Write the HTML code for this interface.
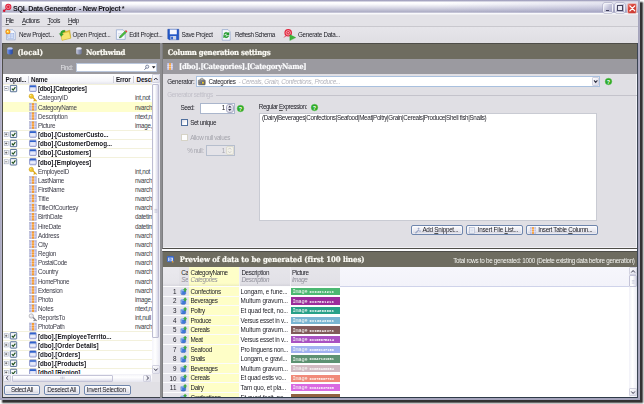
<!DOCTYPE html>
<html lang="en">
<head>
<meta charset="utf-8">
<title>SQL Data Generator - New Project *</title>
<style>
html,body{margin:0;padding:0;}
body{width:644px;height:404px;background:#fff;overflow:hidden;position:relative;font-family:"Liberation Sans","DejaVu Sans",sans-serif;}
#win{filter:blur(0.45px);position:absolute;left:0;top:0;width:640px;height:400px;background:#e1e0e5;box-shadow:2.4px 2.4px 1.6px 0.2px rgba(0,0,0,.8);overflow:hidden;}
#win div{position:absolute;box-sizing:border-box;}
#win svg{position:absolute;overflow:visible;}
.x{position:absolute;white-space:nowrap;line-height:1;color:#1c1c24;font-size:6.3px;}
.t{font-size:6.3px;}
.tb{font-size:6.3px;font-weight:bold;color:#15151c;}
.ttl{font-size:7.2px;font-weight:bold;color:#18181e;}
.h1{font-family:"DejaVu Serif Condensed","DejaVu Serif",serif;font-weight:bold;color:#fbfaf4;font-size:7.7px;-webkit-text-stroke:0.22px #fbfaf4;}
.h2{font-family:"DejaVu Serif Condensed","DejaVu Serif",serif;font-weight:bold;color:#fbfbfd;font-size:7.7px;-webkit-text-stroke:0.15px #fbfbfd;}
.g{color:#a5a5ad;}
.g2{color:#c0bfc8;}
.gi{color:#b4b4bc;font-style:italic;}
.w{color:#f4f4f0;}
.col{color:#3c3c48;}
.mono{font-family:"Liberation Mono","DejaVu Sans Mono",monospace;color:#f4f8f4;font-size:5.2px;}
.mono2{font-family:"Liberation Mono","DejaVu Sans Mono",monospace;color:#fff;font-size:3.6px;font-weight:bold;}
u{text-decoration-thickness:0.4px;text-underline-offset:0.5px;text-decoration-color:#555;}
.btn{border:1px solid #6f86ad;border-radius:2px;background:linear-gradient(#fbfbfd,#e9e9f0 60%,#cfcfdc);box-shadow:inset 0 0 0 0.5px #fff;}

</style>
</head>
<body>
<div id="win">
<div style="left:0px;top:0px;width:640px;height:15px;background:linear-gradient(#a3a2be 0,#a9a8c4 1.2px,#ffffff 1.8px,#fbfbfd 4px,#d6d6e4 8px,#a9a9c2 12.2px,#f4f4f9 13px,#ffffff 14.2px,#cfcfd6 15px);"></div>
<div style="left:0px;top:15px;width:640px;height:11.5px;background:#e3e2e7;"></div>
<div style="left:0px;top:26.2px;width:640px;height:0.9px;background:#c9c8ce;"></div>
<div style="left:0px;top:27px;width:640px;height:17px;background:linear-gradient(#e6e5ea,#dfdee3);"></div>
<div style="left:0px;top:1px;width:2.2px;height:399px;background:linear-gradient(90deg,#a6a5bd,#bcbbd0);"></div>
<div style="left:638px;top:1px;width:2.2px;height:399px;background:linear-gradient(90deg,#a2a1b9,#aeadc4);"></div>
<div style="left:0px;top:397.8px;width:640px;height:2.2px;background:#a5a4bc;"></div>
<svg style="left:2px;top:2px" width="12" height="12" viewBox="0 0 12 12"><line x1="2.3" y1="8.6" x2="4.6" y2="6.6" stroke="#d8203a" stroke-width="1"/><circle cx="6.3" cy="4.9" r="3.1" fill="#e0223c"/><circle cx="6.3" cy="4.9" r="1.7" fill="none" stroke="#f7a9b3" stroke-width="0.7"/><circle cx="2.2" cy="8.8" r="1.25" fill="#d8102c"/></svg>
<div style="left:440px;top:1.6px;width:198px;height:11px;background:linear-gradient(90deg,rgba(150,150,195,0),rgba(150,150,195,.3));"></div>
<div style="left:603.4px;top:3.3px;width:9.8px;height:10px;border-radius:1.5px;background:linear-gradient(135deg,#f4f4fb,#c4c4da 50%,#a6a6c4);border:0.6px solid #f2f2f8;box-shadow:0 0 0 0.4px #9c9cb8;"></div>
<div style="left:606px;top:9.6px;width:3.2px;height:1.3px;background:#3c3c56;"></div>
<div style="left:615.2px;top:3.3px;width:9.8px;height:10px;border-radius:1.5px;background:linear-gradient(135deg,#f4f4fb,#c4c4da 50%,#a6a6c4);border:0.6px solid #f2f2f8;box-shadow:0 0 0 0.4px #9c9cb8;"></div>
<div style="left:617.3px;top:5.4px;width:5.8px;height:5.4px;border:0.7px solid #44445e;border-top:1.7px solid #44445e;background:#e9e9f3;"></div>
<div style="left:626.6px;top:2.9px;width:10.7px;height:10.8px;border-radius:2px;background:linear-gradient(135deg,#e57a72,#d9463d 35%,#c8382f);border:0.5px solid #e9b9b9;"></div>
<svg style="left:626.6px;top:2.9px" width="10.7" height="10.8" viewBox="0 0 10.7 10.8"><path d="M2.9 2.9 L7.8 7.9 M7.8 2.9 L2.9 7.9" stroke="#fff" stroke-width="1.3" stroke-linecap="round"/></svg>
<svg style="left:0;top:0" width="640" height="48" viewBox="0 0 640 48"><path d="M6.6 29.8 h6.4 l2.2 2.2 v7.8 h-8.6 z" fill="#f6f8fd" stroke="#8ea2cc" stroke-width="0.7"/><rect x="7.8" y="33.4" width="6" height="5.2" fill="#dfe8fa" stroke="#8ea6dc" stroke-width="0.5"/><path d="M7.8 35h6M7.8 36.8h6M10.6 33.4v5.2" stroke="#9db3e4" stroke-width="0.45"/><circle cx="7.9" cy="31.7" r="2.5" fill="#f08a1e"/><circle cx="7.9" cy="31.7" r="1.5" fill="#fbd23c"/><circle cx="7.6" cy="31.4" r="0.6" fill="#fff6c0"/><path d="M61.4 31.6 l3.4 -1.2 l1.2 1 l3.8 -1.2 l0.9 7.6 l-8.3 2z" fill="#e6c432" stroke="#b89a22" stroke-width="0.5"/><path d="M60.6 33.6 l8.6 -2 l1.6 6.6 l-8.8 2.2z" fill="#f6e46e" stroke="#c8aa2c" stroke-width="0.5"/><path d="M64.8 30.4 c-2.6 -0.4 -4.4 1.2 -4.3 3.4 l-1.2 -0.2 l1.9 2.9 l2.2 -2.4 l-1.2 -0.2 c0 -1.2 1 -2 2.7 -1.9z" fill="#2fa62e" stroke="#1f7f1f" stroke-width="0.3"/><path d="M116.4 29.8 h6.6 l2.2 2.2 v7.4 h-8.8 z" fill="#f6f8fd" stroke="#8ea2cc" stroke-width="0.7"/><path d="M118 33.6h4.4M118 35.2h3.4M118 36.8h2.4" stroke="#c3cde6" stroke-width="0.6"/><path d="M119.4 38 l0.6 -2 l5 -5 l1.4 1.4 l-5 5z" fill="#4dba40" stroke="#2e8a2a" stroke-width="0.35"/><path d="M119.4 38 l0.3 -1.1 l0.8 0.8z" fill="#333"/><path d="M125 31 l1 -1 l1.4 1.4 l-1 1z" fill="#e8403a"/><path d="M167.8 29.3 h11 v10.4 h-9.8 l-1.2 -1.2z" fill="#2559c7" stroke="#1c45a0" stroke-width="0.5"/><rect x="169.8" y="29.5" width="7" height="4.8" fill="#f6f8fe"/><rect x="170.4" y="36" width="5.8" height="3.7" fill="#cfd6e6"/><rect x="171.2" y="36.7" width="1.7" height="2.6" fill="#2559c7"/><path d="M222.2 29.6 h5.8 l2.2 2.2 v8.4 h-8 z" fill="#f6f8fd" stroke="#8ea2cc" stroke-width="0.7"/><path d="M223.7 34.3 a2.7 2.5 0 0 1 4.5 -1.4 l0.9 -0.9 v2.9 h-2.9 l1 -1 a1.4 1.3 0 0 0 -2.2 0.5z" fill="#22a02e" stroke="#1c8a26" stroke-width="0.25"/><path d="M228.9 35.8 a2.7 2.5 0 0 1 -4.5 1.4 l-0.9 0.9 v-2.9 h2.9 l-1 1 a1.4 1.3 0 0 0 2.2 -0.5z" fill="#22a02e" stroke="#1c8a26" stroke-width="0.25"/><line x1="284.2" y1="37.4" x2="286.2" y2="35.4" stroke="#d8203a" stroke-width="0.9"/><circle cx="288.2" cy="32.8" r="3.8" fill="#e1243c"/><circle cx="288.2" cy="32.8" r="2.2" fill="none" stroke="#fbc4cb" stroke-width="0.75"/><circle cx="288.2" cy="32.8" r="0.75" fill="#fbc4cb"/><path d="M289.8 34.6 l6 3 l-6 3z" fill="#3fb53a" stroke="#2a8f2a" stroke-width="0.3"/></svg>
<div style="left:2.2px;top:43.4px;width:636px;height:354.4px;background:#8e8e91;"></div>
<div style="left:162px;top:248.6px;width:476px;height:3px;background:#fbfbfd;"></div>
<div style="left:2.2px;top:43.4px;width:157.6px;height:354.2px;background:#fff;border:0.8px solid #4e4d48;"></div>
<div style="left:3px;top:44.2px;width:156.8px;height:14.9px;background:#6e6c60;"></div>
<div style="left:3px;top:59px;width:156.8px;height:15.3px;background:#9b9aa0;"></div>
<svg style="left:6.5px;top:46.9px" width="6" height="7.6" viewBox="0 0 6 7.6"><defs><linearGradient id="dbg6" x1="0" x2="1"><stop offset="0" stop-color="#7d9ae6"/><stop offset="0.5" stop-color="#3d64c6"/><stop offset="1" stop-color="#2a4a9e"/></linearGradient></defs><path d="M0.2 1.4 v4.8 a2.8 1.2 0 0 0 5.6 0 v-4.8z" fill="url(#dbg6)"/><ellipse cx="3" cy="1.4" rx="2.8" ry="1.2" fill="#b9c6f0"/></svg>
<svg style="left:75.5px;top:46.9px" width="6" height="7.6" viewBox="0 0 6 7.6"><defs><linearGradient id="dbg75" x1="0" x2="1"><stop offset="0" stop-color="#c9cce0"/><stop offset="0.5" stop-color="#8f96b4"/><stop offset="1" stop-color="#6f7693"/></linearGradient></defs><path d="M0.2 1.4 v4.8 a2.8 1.2 0 0 0 5.6 0 v-4.8z" fill="url(#dbg75)"/><ellipse cx="3" cy="1.4" rx="2.8" ry="1.2" fill="#e6e8f2"/></svg>
<div style="left:76.4px;top:62.6px;width:80.7px;height:9.6px;background:#fff;border:0.6px solid #b9c6dc;"></div>
<svg style="left:143px;top:64px" width="14" height="7" viewBox="0 0 14 7"><circle cx="4.2" cy="2.7" r="1.6" fill="#eef2fa" stroke="#66708c" stroke-width="0.8"/><line x1="3" y1="4" x2="1.4" y2="5.8" stroke="#66708c" stroke-width="0.9"/><path d="M8.9 2.3 h3.6 l-1.8 2.2z" fill="#181820"/></svg>
<div style="left:3px;top:74.3px;width:149.4px;height:9.9px;background:linear-gradient(#ffffff,#f6f6fa 70%,#e6e6ee);"></div>
<div style="left:28.4px;top:75.8px;width:0.7px;height:7.4px;background:#cfcfd8;"></div>
<div style="left:113px;top:75.8px;width:0.7px;height:7.4px;background:#cfcfd8;"></div>
<div style="left:133px;top:75.8px;width:0.7px;height:7.4px;background:#cfcfd8;"></div>
<div style="left:134px;top:74px;width:18.4px;height:10px;overflow:hidden;"><span class="x tb" style="left:2.5px;top:3px;letter-spacing:-0.1px;">Descri</span></div>
<div style="left:152.4px;top:74px;width:7.4px;height:300.4px;background:linear-gradient(90deg,#f4f4fa,#ffffff 40%,#e9e9f2);"></div>
<div style="left:152.4px;top:74.4px;width:7.2px;height:8.8px;background:linear-gradient(135deg,#ffffff,#dcdce9);border:0.5px solid #d2d2e0;border-radius:1px;"></div>
<div style="left:152.4px;top:365.4px;width:7.2px;height:8.8px;background:linear-gradient(135deg,#ffffff,#dcdce9);border:0.5px solid #d2d2e0;border-radius:1px;"></div>
<div style="left:152.4px;top:83.8px;width:7px;height:254px;background:linear-gradient(90deg,#f7f7fc,#ffffff 35%,#d3d3e6);border:0.6px solid #bdbdd2;border-radius:1px;"></div>
<svg style="left:152.4px;top:74px" width="8" height="301" viewBox="0 0 8 301"><path d="M2 6 l1.8 -2 l1.8 2" fill="none" stroke="#303044" stroke-width="0.95"/><path d="M2 294.6 l1.8 2 l1.8 -2" fill="none" stroke="#303044" stroke-width="0.95"/><path d="M2.4 135.4h3M2.4 136.8h3M2.4 138.2h3" stroke="#aeb0c8" stroke-width="0.6"/></svg>
<div style="left:134px;top:93.33px;width:18.4px;height:9.16px;overflow:hidden;"><span class="x t col" style="left:1px;top:1.67px;letter-spacing:-0.3px;">int,not</span></div>
<div style="left:3px;top:102.49px;width:149.4px;height:9.16px;background:#fefecd;"></div>
<div style="left:134px;top:102.49px;width:18.4px;height:9.16px;overflow:hidden;"><span class="x t col" style="left:1px;top:2.51px;letter-spacing:-0.3px;">nvarch</span></div>
<div style="left:134px;top:111.64px;width:18.4px;height:9.16px;overflow:hidden;"><span class="x t col" style="left:1px;top:2.36px;letter-spacing:-0.3px;">ntext,n</span></div>
<div style="left:134px;top:120.8px;width:18.4px;height:9.16px;overflow:hidden;"><span class="x t col" style="left:1px;top:2.2px;letter-spacing:-0.3px;">image,</span></div>
<div style="left:134px;top:166.58px;width:18.4px;height:9.16px;overflow:hidden;"><span class="x t col" style="left:1px;top:2.42px;letter-spacing:-0.3px;">int,not</span></div>
<div style="left:134px;top:175.74px;width:18.4px;height:9.16px;overflow:hidden;"><span class="x t col" style="left:1px;top:2.26px;letter-spacing:-0.3px;">nvarch</span></div>
<div style="left:134px;top:184.9px;width:18.4px;height:9.16px;overflow:hidden;"><span class="x t col" style="left:1px;top:2.1px;letter-spacing:-0.3px;">nvarch</span></div>
<div style="left:134px;top:194.06px;width:18.4px;height:9.16px;overflow:hidden;"><span class="x t col" style="left:1px;top:1.94px;letter-spacing:-0.3px;">nvarch</span></div>
<div style="left:134px;top:203.21px;width:18.4px;height:9.16px;overflow:hidden;"><span class="x t col" style="left:1px;top:1.79px;letter-spacing:-0.3px;">nvarch</span></div>
<div style="left:134px;top:212.37px;width:18.4px;height:9.16px;overflow:hidden;"><span class="x t col" style="left:1px;top:1.63px;letter-spacing:-0.3px;">datetim</span></div>
<div style="left:134px;top:221.53px;width:18.4px;height:9.16px;overflow:hidden;"><span class="x t col" style="left:1px;top:2.47px;letter-spacing:-0.3px;">datetim</span></div>
<div style="left:134px;top:230.68px;width:18.4px;height:9.16px;overflow:hidden;"><span class="x t col" style="left:1px;top:2.32px;letter-spacing:-0.3px;">nvarch</span></div>
<div style="left:134px;top:239.84px;width:18.4px;height:9.16px;overflow:hidden;"><span class="x t col" style="left:1px;top:2.16px;letter-spacing:-0.3px;">nvarch</span></div>
<div style="left:134px;top:249px;width:18.4px;height:9.16px;overflow:hidden;"><span class="x t col" style="left:1px;top:2px;letter-spacing:-0.3px;">nvarch</span></div>
<div style="left:134px;top:258.15px;width:18.4px;height:9.16px;overflow:hidden;"><span class="x t col" style="left:1px;top:1.85px;letter-spacing:-0.3px;">nvarch</span></div>
<div style="left:134px;top:267.31px;width:18.4px;height:9.16px;overflow:hidden;"><span class="x t col" style="left:1px;top:1.69px;letter-spacing:-0.3px;">nvarch</span></div>
<div style="left:134px;top:276.47px;width:18.4px;height:9.16px;overflow:hidden;"><span class="x t col" style="left:1px;top:2.53px;letter-spacing:-0.3px;">nvarch</span></div>
<div style="left:134px;top:285.63px;width:18.4px;height:9.16px;overflow:hidden;"><span class="x t col" style="left:1px;top:2.37px;letter-spacing:-0.3px;">nvarch</span></div>
<div style="left:134px;top:294.78px;width:18.4px;height:9.16px;overflow:hidden;"><span class="x t col" style="left:1px;top:2.22px;letter-spacing:-0.3px;">image,</span></div>
<div style="left:134px;top:303.94px;width:18.4px;height:9.16px;overflow:hidden;"><span class="x t col" style="left:1px;top:2.06px;letter-spacing:-0.3px;">ntext,n</span></div>
<div style="left:134px;top:313.1px;width:18.4px;height:9.16px;overflow:hidden;"><span class="x t col" style="left:1px;top:1.9px;letter-spacing:-0.3px;">int,null</span></div>
<div style="left:134px;top:322.25px;width:18.4px;height:9.16px;overflow:hidden;"><span class="x t col" style="left:1px;top:1.75px;letter-spacing:-0.3px;">nvarch</span></div>
<div style="left:37px;top:368.04px;width:100px;height:6.36px;overflow:hidden;"><span class="x tb" style="left:1px;top:1.96px;letter-spacing:-0.05px;">[dbo].[Region]</span></div>
<div style="left:3px;top:84.2px;width:149.4px;height:290.2px;overflow:hidden;"><div style="left:0px;top:-0.13px;width:149.4px;height:0.6px;background:#f3f1dc;"></div><div style="left:0px;top:45.66px;width:149.4px;height:0.6px;background:#f3f1dc;"></div><div style="left:0px;top:54.81px;width:149.4px;height:0.6px;background:#f3f1dc;"></div><div style="left:0px;top:63.97px;width:149.4px;height:0.6px;background:#f3f1dc;"></div><div style="left:0px;top:73.13px;width:149.4px;height:0.6px;background:#f3f1dc;"></div><div style="left:0px;top:247.11px;width:149.4px;height:0.6px;background:#f3f1dc;"></div><div style="left:0px;top:256.27px;width:149.4px;height:0.6px;background:#f3f1dc;"></div><div style="left:0px;top:265.42px;width:149.4px;height:0.6px;background:#f3f1dc;"></div><div style="left:0px;top:274.58px;width:149.4px;height:0.6px;background:#f3f1dc;"></div><div style="left:0px;top:283.74px;width:149.4px;height:0.6px;background:#f3f1dc;"></div></div>
<svg style="left:0;top:84.2px;clip-path:inset(0 0 0 0)" width="153" height="290.2" viewBox="0 84.2 153 290.2"><rect x="4.2" y="86.75" width="4" height="4" fill="#fff" stroke="#9aa3b8" stroke-width="0.6"/><path d="M5.1 88.75 h2.2" stroke="#333" stroke-width="0.6"/><rect x="10.3" y="85.55" width="6.4" height="6.4" rx="0.6" fill="#f7f7fa" stroke="#2d4f7c" stroke-width="0.8"/><path d="M11.8 88.75 l1.4 1.5 l2.2 -2.9" fill="none" stroke="#1c4f1c" stroke-width="1.15"/><rect x="29.6" y="85.4" width="6.6" height="6.3" rx="0.8" fill="#d9ddf5" stroke="#6f79bc" stroke-width="0.7"/><path d="M29.9 85.65 h6 v1.7 h-6z" fill="#2f62cc"/><path d="M30 89.35 h5.8 M32 87.55 v2.8 M34 87.55 v2.8" stroke="#fbfcff" stroke-width="0.5"/><path d="M32.6 97.51 l3.7 3.6 M35.1 100.01 l-1.1 1.1" stroke="#dca81c" stroke-width="1.3" stroke-linecap="round"/><circle cx="31.3" cy="96.41" r="2.2" fill="#efc52a" stroke="#c99a18" stroke-width="0.5"/><circle cx="30.7" cy="95.81" r="0.7" fill="#fff3b0"/><rect x="29.5" y="103.41" width="6.9" height="7.3" fill="#b3b5e6" stroke="#a9acc8" stroke-width="0.5"/><rect x="31.8" y="103.41" width="2.4" height="7.3" fill="#f3911f"/><path d="M31.75 103.41 v7.3 M34.25 103.41 v7.3 M29.5 105.86 h6.9 M29.5 108.26 h6.9" stroke="#fdfdff" stroke-width="0.4"/><rect x="29.5" y="112.57" width="6.9" height="7.3" fill="#b3b5e6" stroke="#a9acc8" stroke-width="0.5"/><rect x="31.8" y="112.57" width="2.4" height="7.3" fill="#f3911f"/><path d="M31.75 112.57 v7.3 M34.25 112.57 v7.3 M29.5 115.02 h6.9 M29.5 117.42 h6.9" stroke="#fdfdff" stroke-width="0.4"/><rect x="29.5" y="121.73" width="6.9" height="7.3" fill="#b3b5e6" stroke="#a9acc8" stroke-width="0.5"/><rect x="31.8" y="121.73" width="2.4" height="7.3" fill="#f3911f"/><path d="M31.75 121.73 v7.3 M34.25 121.73 v7.3 M29.5 124.18 h6.9 M29.5 126.58 h6.9" stroke="#fdfdff" stroke-width="0.4"/><rect x="4.2" y="132.53" width="4" height="4" fill="#fff" stroke="#9aa3b8" stroke-width="0.6"/><path d="M5.1 134.53 h2.2 M6.2 133.44 v2.2" stroke="#333" stroke-width="0.6"/><rect x="10.3" y="131.34" width="6.4" height="6.4" rx="0.6" fill="#f7f7fa" stroke="#2d4f7c" stroke-width="0.8"/><path d="M11.8 134.53 l1.4 1.5 l2.2 -2.9" fill="none" stroke="#1c4f1c" stroke-width="1.15"/><rect x="29.6" y="131.19" width="6.6" height="6.3" rx="0.8" fill="#d9ddf5" stroke="#6f79bc" stroke-width="0.7"/><path d="M29.9 131.44 h6 v1.7 h-6z" fill="#2f62cc"/><path d="M30 135.13 h5.8 M32 133.34 v2.8 M34 133.34 v2.8" stroke="#fbfcff" stroke-width="0.5"/><rect x="4.2" y="141.69" width="4" height="4" fill="#fff" stroke="#9aa3b8" stroke-width="0.6"/><path d="M5.1 143.69 h2.2 M6.2 142.59 v2.2" stroke="#333" stroke-width="0.6"/><rect x="10.3" y="140.49" width="6.4" height="6.4" rx="0.6" fill="#f7f7fa" stroke="#2d4f7c" stroke-width="0.8"/><path d="M11.8 143.69 l1.4 1.5 l2.2 -2.9" fill="none" stroke="#1c4f1c" stroke-width="1.15"/><rect x="29.6" y="140.34" width="6.6" height="6.3" rx="0.8" fill="#d9ddf5" stroke="#6f79bc" stroke-width="0.7"/><path d="M29.9 140.59 h6 v1.7 h-6z" fill="#2f62cc"/><path d="M30 144.29 h5.8 M32 142.49 v2.8 M34 142.49 v2.8" stroke="#fbfcff" stroke-width="0.5"/><rect x="4.2" y="150.85" width="4" height="4" fill="#fff" stroke="#9aa3b8" stroke-width="0.6"/><path d="M5.1 152.85 h2.2 M6.2 151.75 v2.2" stroke="#333" stroke-width="0.6"/><rect x="10.3" y="149.65" width="6.4" height="6.4" rx="0.6" fill="#f7f7fa" stroke="#2d4f7c" stroke-width="0.8"/><path d="M11.8 152.85 l1.4 1.5 l2.2 -2.9" fill="none" stroke="#1c4f1c" stroke-width="1.15"/><rect x="29.6" y="149.5" width="6.6" height="6.3" rx="0.8" fill="#d9ddf5" stroke="#6f79bc" stroke-width="0.7"/><path d="M29.9 149.75 h6 v1.7 h-6z" fill="#2f62cc"/><path d="M30 153.45 h5.8 M32 151.65 v2.8 M34 151.65 v2.8" stroke="#fbfcff" stroke-width="0.5"/><rect x="4.2" y="160.01" width="4" height="4" fill="#fff" stroke="#9aa3b8" stroke-width="0.6"/><path d="M5.1 162.01 h2.2" stroke="#333" stroke-width="0.6"/><rect x="10.3" y="158.81" width="6.4" height="6.4" rx="0.6" fill="#f7f7fa" stroke="#2d4f7c" stroke-width="0.8"/><path d="M11.8 162.01 l1.4 1.5 l2.2 -2.9" fill="none" stroke="#1c4f1c" stroke-width="1.15"/><rect x="29.6" y="158.66" width="6.6" height="6.3" rx="0.8" fill="#d9ddf5" stroke="#6f79bc" stroke-width="0.7"/><path d="M29.9 158.91 h6 v1.7 h-6z" fill="#2f62cc"/><path d="M30 162.61 h5.8 M32 160.81 v2.8 M34 160.81 v2.8" stroke="#fbfcff" stroke-width="0.5"/><path d="M32.6 170.76 l3.7 3.6 M35.1 173.26 l-1.1 1.1" stroke="#dca81c" stroke-width="1.3" stroke-linecap="round"/><circle cx="31.3" cy="169.66" r="2.2" fill="#efc52a" stroke="#c99a18" stroke-width="0.5"/><circle cx="30.7" cy="169.06" r="0.7" fill="#fff3b0"/><rect x="29.5" y="176.67" width="6.9" height="7.3" fill="#b3b5e6" stroke="#a9acc8" stroke-width="0.5"/><rect x="31.8" y="176.67" width="2.4" height="7.3" fill="#f3911f"/><path d="M31.75 176.67 v7.3 M34.25 176.67 v7.3 M29.5 179.12 h6.9 M29.5 181.52 h6.9" stroke="#fdfdff" stroke-width="0.4"/><rect x="29.5" y="185.83" width="6.9" height="7.3" fill="#b3b5e6" stroke="#a9acc8" stroke-width="0.5"/><rect x="31.8" y="185.83" width="2.4" height="7.3" fill="#f3911f"/><path d="M31.75 185.83 v7.3 M34.25 185.83 v7.3 M29.5 188.28 h6.9 M29.5 190.68 h6.9" stroke="#fdfdff" stroke-width="0.4"/><rect x="29.5" y="194.98" width="6.9" height="7.3" fill="#b3b5e6" stroke="#a9acc8" stroke-width="0.5"/><rect x="31.8" y="194.98" width="2.4" height="7.3" fill="#f3911f"/><path d="M31.75 194.98 v7.3 M34.25 194.98 v7.3 M29.5 197.43 h6.9 M29.5 199.83 h6.9" stroke="#fdfdff" stroke-width="0.4"/><rect x="29.5" y="204.14" width="6.9" height="7.3" fill="#b3b5e6" stroke="#a9acc8" stroke-width="0.5"/><rect x="31.8" y="204.14" width="2.4" height="7.3" fill="#f3911f"/><path d="M31.75 204.14 v7.3 M34.25 204.14 v7.3 M29.5 206.59 h6.9 M29.5 208.99 h6.9" stroke="#fdfdff" stroke-width="0.4"/><rect x="29.5" y="213.3" width="6.9" height="7.3" fill="#b3b5e6" stroke="#a9acc8" stroke-width="0.5"/><rect x="31.8" y="213.3" width="2.4" height="7.3" fill="#f3911f"/><path d="M31.75 213.3 v7.3 M34.25 213.3 v7.3 M29.5 215.75 h6.9 M29.5 218.15 h6.9" stroke="#fdfdff" stroke-width="0.4"/><rect x="29.5" y="222.45" width="6.9" height="7.3" fill="#b3b5e6" stroke="#a9acc8" stroke-width="0.5"/><rect x="31.8" y="222.45" width="2.4" height="7.3" fill="#f3911f"/><path d="M31.75 222.45 v7.3 M34.25 222.45 v7.3 M29.5 224.91 h6.9 M29.5 227.3 h6.9" stroke="#fdfdff" stroke-width="0.4"/><rect x="29.5" y="231.61" width="6.9" height="7.3" fill="#b3b5e6" stroke="#a9acc8" stroke-width="0.5"/><rect x="31.8" y="231.61" width="2.4" height="7.3" fill="#f3911f"/><path d="M31.75 231.61 v7.3 M34.25 231.61 v7.3 M29.5 234.06 h6.9 M29.5 236.46 h6.9" stroke="#fdfdff" stroke-width="0.4"/><rect x="29.5" y="240.77" width="6.9" height="7.3" fill="#b3b5e6" stroke="#a9acc8" stroke-width="0.5"/><rect x="31.8" y="240.77" width="2.4" height="7.3" fill="#f3911f"/><path d="M31.75 240.77 v7.3 M34.25 240.77 v7.3 M29.5 243.22 h6.9 M29.5 245.62 h6.9" stroke="#fdfdff" stroke-width="0.4"/><rect x="29.5" y="249.93" width="6.9" height="7.3" fill="#b3b5e6" stroke="#a9acc8" stroke-width="0.5"/><rect x="31.8" y="249.93" width="2.4" height="7.3" fill="#f3911f"/><path d="M31.75 249.93 v7.3 M34.25 249.93 v7.3 M29.5 252.38 h6.9 M29.5 254.78 h6.9" stroke="#fdfdff" stroke-width="0.4"/><rect x="29.5" y="259.08" width="6.9" height="7.3" fill="#b3b5e6" stroke="#a9acc8" stroke-width="0.5"/><rect x="31.8" y="259.08" width="2.4" height="7.3" fill="#f3911f"/><path d="M31.75 259.08 v7.3 M34.25 259.08 v7.3 M29.5 261.53 h6.9 M29.5 263.93 h6.9" stroke="#fdfdff" stroke-width="0.4"/><rect x="29.5" y="268.24" width="6.9" height="7.3" fill="#b3b5e6" stroke="#a9acc8" stroke-width="0.5"/><rect x="31.8" y="268.24" width="2.4" height="7.3" fill="#f3911f"/><path d="M31.75 268.24 v7.3 M34.25 268.24 v7.3 M29.5 270.69 h6.9 M29.5 273.09 h6.9" stroke="#fdfdff" stroke-width="0.4"/><rect x="29.5" y="277.4" width="6.9" height="7.3" fill="#b3b5e6" stroke="#a9acc8" stroke-width="0.5"/><rect x="31.8" y="277.4" width="2.4" height="7.3" fill="#f3911f"/><path d="M31.75 277.4 v7.3 M34.25 277.4 v7.3 M29.5 279.85 h6.9 M29.5 282.25 h6.9" stroke="#fdfdff" stroke-width="0.4"/><rect x="29.5" y="286.55" width="6.9" height="7.3" fill="#b3b5e6" stroke="#a9acc8" stroke-width="0.5"/><rect x="31.8" y="286.55" width="2.4" height="7.3" fill="#f3911f"/><path d="M31.75 286.55 v7.3 M34.25 286.55 v7.3 M29.5 289 h6.9 M29.5 291.4 h6.9" stroke="#fdfdff" stroke-width="0.4"/><rect x="29.5" y="295.71" width="6.9" height="7.3" fill="#b3b5e6" stroke="#a9acc8" stroke-width="0.5"/><rect x="31.8" y="295.71" width="2.4" height="7.3" fill="#f3911f"/><path d="M31.75 295.71 v7.3 M34.25 295.71 v7.3 M29.5 298.16 h6.9 M29.5 300.56 h6.9" stroke="#fdfdff" stroke-width="0.4"/><rect x="29.5" y="304.87" width="6.9" height="7.3" fill="#b3b5e6" stroke="#a9acc8" stroke-width="0.5"/><rect x="31.8" y="304.87" width="2.4" height="7.3" fill="#f3911f"/><path d="M31.75 304.87 v7.3 M34.25 304.87 v7.3 M29.5 307.32 h6.9 M29.5 309.72 h6.9" stroke="#fdfdff" stroke-width="0.4"/><path d="M32.6 317.28 l3.7 3.6 M35.1 319.78 l-1.1 1.1" stroke="#85858f" stroke-width="1.3" stroke-linecap="round"/><circle cx="31.3" cy="316.18" r="2.2" fill="#e3e3e9" stroke="#8d8d98" stroke-width="0.5"/><circle cx="30.7" cy="315.57" r="0.7" fill="#fff"/><rect x="29.5" y="323.18" width="6.9" height="7.3" fill="#b3b5e6" stroke="#a9acc8" stroke-width="0.5"/><rect x="31.8" y="323.18" width="2.4" height="7.3" fill="#f3911f"/><path d="M31.75 323.18 v7.3 M34.25 323.18 v7.3 M29.5 325.63 h6.9 M29.5 328.03 h6.9" stroke="#fdfdff" stroke-width="0.4"/><rect x="4.2" y="333.99" width="4" height="4" fill="#fff" stroke="#9aa3b8" stroke-width="0.6"/><path d="M5.1 335.99 h2.2 M6.2 334.89 v2.2" stroke="#333" stroke-width="0.6"/><rect x="10.3" y="332.79" width="6.4" height="6.4" rx="0.6" fill="#f7f7fa" stroke="#2d4f7c" stroke-width="0.8"/><path d="M11.8 335.99 l1.4 1.5 l2.2 -2.9" fill="none" stroke="#1c4f1c" stroke-width="1.15"/><rect x="29.6" y="332.64" width="6.6" height="6.3" rx="0.8" fill="#d9ddf5" stroke="#6f79bc" stroke-width="0.7"/><path d="M29.9 332.89 h6 v1.7 h-6z" fill="#2f62cc"/><path d="M30 336.59 h5.8 M32 334.79 v2.8 M34 334.79 v2.8" stroke="#fbfcff" stroke-width="0.5"/><rect x="4.2" y="343.15" width="4" height="4" fill="#fff" stroke="#9aa3b8" stroke-width="0.6"/><path d="M5.1 345.15 h2.2 M6.2 344.05 v2.2" stroke="#333" stroke-width="0.6"/><rect x="10.3" y="341.95" width="6.4" height="6.4" rx="0.6" fill="#f7f7fa" stroke="#2d4f7c" stroke-width="0.8"/><path d="M11.8 345.15 l1.4 1.5 l2.2 -2.9" fill="none" stroke="#1c4f1c" stroke-width="1.15"/><rect x="29.6" y="341.8" width="6.6" height="6.3" rx="0.8" fill="#d9ddf5" stroke="#6f79bc" stroke-width="0.7"/><path d="M29.9 342.05 h6 v1.7 h-6z" fill="#2f62cc"/><path d="M30 345.75 h5.8 M32 343.95 v2.8 M34 343.95 v2.8" stroke="#fbfcff" stroke-width="0.5"/><rect x="4.2" y="352.3" width="4" height="4" fill="#fff" stroke="#9aa3b8" stroke-width="0.6"/><path d="M5.1 354.3 h2.2 M6.2 353.2 v2.2" stroke="#333" stroke-width="0.6"/><rect x="10.3" y="351.1" width="6.4" height="6.4" rx="0.6" fill="#f7f7fa" stroke="#2d4f7c" stroke-width="0.8"/><path d="M11.8 354.3 l1.4 1.5 l2.2 -2.9" fill="none" stroke="#1c4f1c" stroke-width="1.15"/><rect x="29.6" y="350.95" width="6.6" height="6.3" rx="0.8" fill="#d9ddf5" stroke="#6f79bc" stroke-width="0.7"/><path d="M29.9 351.2 h6 v1.7 h-6z" fill="#2f62cc"/><path d="M30 354.9 h5.8 M32 353.1 v2.8 M34 353.1 v2.8" stroke="#fbfcff" stroke-width="0.5"/><rect x="4.2" y="361.46" width="4" height="4" fill="#fff" stroke="#9aa3b8" stroke-width="0.6"/><path d="M5.1 363.46 h2.2 M6.2 362.36 v2.2" stroke="#333" stroke-width="0.6"/><rect x="10.3" y="360.26" width="6.4" height="6.4" rx="0.6" fill="#f7f7fa" stroke="#2d4f7c" stroke-width="0.8"/><path d="M11.8 363.46 l1.4 1.5 l2.2 -2.9" fill="none" stroke="#1c4f1c" stroke-width="1.15"/><rect x="29.6" y="360.11" width="6.6" height="6.3" rx="0.8" fill="#d9ddf5" stroke="#6f79bc" stroke-width="0.7"/><path d="M29.9 360.36 h6 v1.7 h-6z" fill="#2f62cc"/><path d="M30 364.06 h5.8 M32 362.26 v2.8 M34 362.26 v2.8" stroke="#fbfcff" stroke-width="0.5"/><rect x="4.2" y="370.62" width="4" height="4" fill="#fff" stroke="#9aa3b8" stroke-width="0.6"/><path d="M5.1 372.62 h2.2 M6.2 371.52 v2.2" stroke="#333" stroke-width="0.6"/><rect x="10.3" y="369.42" width="6.4" height="6.4" rx="0.6" fill="#f7f7fa" stroke="#2d4f7c" stroke-width="0.8"/><path d="M11.8 372.62 l1.4 1.5 l2.2 -2.9" fill="none" stroke="#1c4f1c" stroke-width="1.15"/><rect x="29.6" y="369.27" width="6.6" height="6.3" rx="0.8" fill="#d9ddf5" stroke="#6f79bc" stroke-width="0.7"/><path d="M29.9 369.52 h6 v1.7 h-6z" fill="#2f62cc"/><path d="M30 373.22 h5.8 M32 371.42 v2.8 M34 371.42 v2.8" stroke="#fbfcff" stroke-width="0.5"/></svg>
<div style="left:3px;top:374.4px;width:156.8px;height:8px;background:linear-gradient(#f1f1f7,#ffffff 40%,#e6e6f0);"></div>
<div style="left:3.2px;top:374.6px;width:8px;height:7.6px;background:linear-gradient(135deg,#ffffff,#dcdce9);border:0.5px solid #d2d2e0;border-radius:1px;"></div>
<div style="left:143.4px;top:374.6px;width:8px;height:7.6px;background:linear-gradient(135deg,#ffffff,#dcdce9);border:0.5px solid #d2d2e0;border-radius:1px;"></div>
<div style="left:11.6px;top:374.6px;width:101.6px;height:7.6px;background:linear-gradient(#ffffff,#fbfbfe 40%,#d9d9e7);border:0.5px solid #c4c4d8;border-radius:1px;"></div>
<svg style="left:3px;top:374.4px" width="157" height="8" viewBox="0 0 157 8"><path d="M5.2 2.2 l-2 1.8 l2 1.8" fill="none" stroke="#303044" stroke-width="0.95"/><path d="M143.6 2.2 l2 1.8 l-2 1.8" fill="none" stroke="#303044" stroke-width="0.95"/><path d="M58 2.6v2.8M59.5 2.6v2.8M61 2.6v2.8" stroke="#aeb0c8" stroke-width="0.6"/></svg>
<div style="left:151.6px;top:374.4px;width:8.2px;height:8px;background:#e6e5ea;"></div>
<div style="left:3px;top:382.4px;width:156.8px;height:14.4px;background:#e1e0e5;"></div>
<div class="btn" style="left:4.4px;top:384.6px;width:35.8px;height:10.6px;"></div>
<div class="btn" style="left:44.4px;top:384.6px;width:35.2px;height:10.6px;"></div>
<div class="btn" style="left:83.6px;top:384.6px;width:47px;height:10.6px;"></div>
<div style="left:161.9px;top:43.4px;width:476px;height:205.7px;background:#e0dfe4;border:0.8px solid #4e4d48;border-left-color:#7e7e80;box-shadow:inset -0.8px -0.8px 0 #f6f6fa;"></div>
<div style="left:163.2px;top:44.2px;width:474px;height:14.9px;background:#6e6c60;"></div>
<div style="left:163.2px;top:59px;width:474px;height:15.2px;background:#9b9aa0;"></div>
<svg style="left:166.6px;top:63px" width="6" height="7" viewBox="0 0 6 7"><rect x="0.1" y="0.1" width="5.8" height="6.8" fill="#bfc1ea"/><rect x="2" y="0.1" width="2" height="6.8" fill="#f3911f"/><path d="M1.95 0.1v6.8M4.05 0.1v6.8M0.1 2.4h5.8M0.1 4.6h5.8" stroke="#fff" stroke-width="0.4"/></svg>
<div style="left:196.2px;top:76.2px;width:403.6px;height:10.6px;background:#fff;border:0.8px solid #a9c0de;"></div>
<svg style="left:198.2px;top:77.8px" width="7.6" height="7.4" viewBox="0 0 7.6 7.4"><defs><linearGradient id="bcg" x1="0" y1="0" x2="1" y2="1"><stop offset="0" stop-color="#9c9c9c"/><stop offset="1" stop-color="#5e5e5e"/></linearGradient></defs><path d="M2.6 2 v-1 q0 -0.6 0.6 -0.6 h1.4 q0.6 0 0.6 0.6 v1" fill="none" stroke="#6a6a6a" stroke-width="0.7"/><rect x="0.3" y="1.8" width="7" height="5.2" rx="0.9" fill="url(#bcg)" stroke="#585858" stroke-width="0.4"/><path d="M0.4 4.2 h6.8" stroke="#4e4e4e" stroke-width="0.4"/><rect x="3.9" y="3.9" width="1.9" height="1.7" fill="#f4cc1e"/><rect x="3" y="4.1" width="0.9" height="1.3" fill="#3b5fb4"/></svg>
<div style="left:591.6px;top:77.2px;width:7.4px;height:8.8px;background:linear-gradient(135deg,#ffffff,#d9d9e6);border:0.5px solid #d2d2e0;border-radius:1px;"></div>
<svg style="left:591.6px;top:77.2px" width="7.4" height="8.8" viewBox="0 0 7.4 8.8"><path d="M2 3.4 l1.7 2 l1.7 -2" fill="none" stroke="#333346" stroke-width="1.1"/></svg>
<svg style="left:605.1px;top:78.3px" width="7" height="7" viewBox="0 0 7 7"><circle cx="3.5" cy="3.5" r="3.3" fill="#2faa28" stroke="#4bbf45" stroke-width="0.4"/><text x="3.5" y="5.5" font-size="5.4" font-weight="bold" text-anchor="middle" fill="#fff" font-family="Liberation Sans, sans-serif">?</text></svg>
<div style="left:216.4px;top:95.4px;width:420.6px;height:0.7px;background:#c4c3cb;"></div>
<div style="left:200px;top:103.3px;width:34.5px;height:10.4px;background:#fff;border:0.8px solid #aab6cc;"></div>
<div style="left:226.3px;top:104.2px;width:7.6px;height:8.6px;background:linear-gradient(135deg,#ffffff,#d3d3e2);border:0.6px solid #a9a9c2;border-radius:3px;"></div>
<svg style="left:226.3px;top:104.2px" width="7.6" height="8.6" viewBox="0 0 7.6 8.6"><path d="M2.1 3.6 l1.7 -2 l1.7 2z M2.1 5 l1.7 2 l1.7 -2z" fill="#34344a"/><path d="M0.6 4.3h6.4" stroke="#b9b9cf" stroke-width="0.4"/></svg>
<svg style="left:236.9px;top:104.5px" width="7" height="7" viewBox="0 0 7 7"><circle cx="3.5" cy="3.5" r="3.3" fill="#2faa28" stroke="#4bbf45" stroke-width="0.4"/><text x="3.5" y="5.5" font-size="5.4" font-weight="bold" text-anchor="middle" fill="#fff" font-family="Liberation Sans, sans-serif">?</text></svg>
<svg style="left:310.5px;top:103.7px" width="7" height="7" viewBox="0 0 7 7"><circle cx="3.5" cy="3.5" r="3.3" fill="#2faa28" stroke="#4bbf45" stroke-width="0.4"/><text x="3.5" y="5.5" font-size="5.4" font-weight="bold" text-anchor="middle" fill="#fff" font-family="Liberation Sans, sans-serif">?</text></svg>
<div style="left:180.6px;top:119.3px;width:7.2px;height:7.2px;background:linear-gradient(135deg,#dadae4,#ffffff 70%);border:0.9px solid #50709e;"></div>
<div style="left:180.6px;top:134px;width:7.2px;height:7.2px;background:#fdfdfd;border:0.8px solid #d6d3c6;"></div>
<div style="left:206px;top:145.3px;width:28.5px;height:10.5px;background:#e4e3e8;border:0.8px solid #b6becd;"></div>
<div style="left:226.4px;top:146.2px;width:7.4px;height:8.7px;background:#f1f0e8;border:0.5px solid #dddbd0;border-radius:2px;"></div>
<svg style="left:226.4px;top:146.2px" width="7.4" height="8.7" viewBox="0 0 7.4 8.7"><path d="M2.2 3.5 l1.5 -1.6 l1.5 1.6 M2.2 5.3 l1.5 1.6 l1.5 -1.6" fill="none" stroke="#c2c2c6" stroke-width="0.8"/></svg>
<div style="left:259.2px;top:112.8px;width:338.2px;height:107.8px;background:#fff;border:0.8px solid #c9cbd3;"></div>
<div class="btn" style="left:411.2px;top:225px;width:51.6px;height:10.4px;"></div>
<div class="btn" style="left:466.4px;top:225px;width:56.6px;height:10.4px;"></div>
<div class="btn" style="left:526.2px;top:225px;width:71.4px;height:10.4px;"></div>
<svg style="left:414px;top:226.6px" width="7" height="7" viewBox="0 0 7 7"><path d="M1 5.8 l3.4 -3.4 l0.9 0.9 l-3.4 3.4z" fill="#9aa6c4"/><path d="M4.6 0.6v2M3.6 1.6h2M6 3.4v1.4M5.3 4.1h1.4" stroke="#7d8cb8" stroke-width="0.5"/></svg>
<svg style="left:469.4px;top:227px" width="6" height="7" viewBox="0 0 6 7"><rect x="0.4" y="0.4" width="5" height="6" fill="#eef1f8" stroke="#a9b3cc" stroke-width="0.6"/><path d="M1.4 2.2h3M1.4 3.6h3M1.4 5h3" stroke="#c6cde0" stroke-width="0.5"/></svg>
<svg style="left:529.6px;top:226.8px" width="6" height="7" viewBox="0 0 6 7"><rect x="0.1" y="0.1" width="5.8" height="6.8" fill="#bfc1ea" stroke="#b9bcd6" stroke-width="0.3"/><rect x="2" y="0.1" width="2" height="6.8" fill="#f3911f"/><path d="M1.95 0.1v6.8M4.05 0.1v6.8M0.1 2.4h5.8M0.1 4.6h5.8" stroke="#fff" stroke-width="0.4"/></svg>
<div style="left:161.9px;top:250.9px;width:476px;height:146.7px;background:#fff;border:0.8px solid #4e4d48;border-left-color:#7e7e80;"></div>
<div style="left:163px;top:251.6px;width:474.2px;height:15px;background:#6e6c60;"></div>
<svg style="left:166.8px;top:255.6px" width="7.2" height="6.6" viewBox="0 0 7.2 6.6"><rect x="0.45" y="0.45" width="6" height="5.2" rx="0.5" fill="#dfe8fb" stroke="#2f62cc" stroke-width="0.9"/><path d="M0.5 1.2h6" stroke="#2f62cc" stroke-width="0.9"/><path d="M2.2 2.2v2.6h1.3v-2.6zM4.4 2.4v2.2" stroke="#3b6fd6" stroke-width="0.6" fill="none"/><path d="M5 4.2 l2 2 l-2.2 0.2z" fill="#f0a020"/></svg>
<div style="left:163px;top:266.6px;width:465.6px;height:20px;background:linear-gradient(#f6f6fc,#f3f3fa);border-bottom:0.8px solid #cfd3ea;"></div>
<div style="left:163px;top:266.6px;width:177.2px;height:19.4px;background:linear-gradient(#e6e5ea,#e2e1e7 85%,#d4d3da);"></div>
<div style="left:163px;top:266.6px;width:16px;height:19.4px;background:linear-gradient(#eae9ee,#e6e5ea 85%,#d8d7de);"></div>
<div style="left:188.6px;top:266.6px;width:50.4px;height:19.4px;background:linear-gradient(#fefec9,#fefec7 85%,#eeeebc);"></div>
<div style="left:163px;top:286px;width:177.2px;height:1px;background:#fdfdfe;"></div>
<div style="left:239px;top:266.6px;width:0.6px;height:19.4px;background:#f0eff4;"></div>
<div style="left:289.6px;top:266.6px;width:0.6px;height:19.4px;background:#f0eff4;"></div>
<div style="left:179px;top:266.6px;width:9.4px;height:19.4px;overflow:hidden;"><span class="x t" style="left:2.2px;top:3.4px;letter-spacing:-0.2px;">Ca</span><span class="x t gi" style="left:2.2px;top:10.4px;color:#8f8e99;letter-spacing:-0.2px;">Se</span></div>
<div style="left:163px;top:287px;width:25.6px;height:8.7px;background:#e6e5eb;"></div>
<div style="left:188.6px;top:287px;width:50.4px;height:8.7px;background:#fefec7;"></div>
<div style="left:163px;top:295.7px;width:177.2px;height:0.94px;background:#fbfbfd;"></div>
<div style="left:290.7px;top:287.85px;width:49.5px;height:7.2px;background:#4cb872;"></div>
<div style="left:163px;top:296.64px;width:25.6px;height:8.7px;background:#e6e5eb;"></div>
<div style="left:188.6px;top:296.64px;width:50.4px;height:8.7px;background:#fefec7;"></div>
<div style="left:163px;top:305.34px;width:177.2px;height:0.94px;background:#fbfbfd;"></div>
<div style="left:290.7px;top:297.49px;width:49.5px;height:7.2px;background:#9b2c9b;"></div>
<div style="left:163px;top:306.28px;width:25.6px;height:8.7px;background:#e6e5eb;"></div>
<div style="left:188.6px;top:306.28px;width:50.4px;height:8.7px;background:#fefec7;"></div>
<div style="left:163px;top:314.98px;width:177.2px;height:0.94px;background:#fbfbfd;"></div>
<div style="left:290.7px;top:307.13px;width:49.5px;height:7.2px;background:#27a088;"></div>
<div style="left:163px;top:315.92px;width:25.6px;height:8.7px;background:#e6e5eb;"></div>
<div style="left:188.6px;top:315.92px;width:50.4px;height:8.7px;background:#fefec7;"></div>
<div style="left:163px;top:324.62px;width:177.2px;height:0.94px;background:#fbfbfd;"></div>
<div style="left:290.7px;top:316.77px;width:49.5px;height:7.2px;background:#79b5d2;"></div>
<div style="left:163px;top:325.56px;width:25.6px;height:8.7px;background:#e6e5eb;"></div>
<div style="left:188.6px;top:325.56px;width:50.4px;height:8.7px;background:#fefec7;"></div>
<div style="left:163px;top:334.26px;width:177.2px;height:0.94px;background:#fbfbfd;"></div>
<div style="left:290.7px;top:326.41px;width:49.5px;height:7.2px;background:#80595a;"></div>
<div style="left:163px;top:335.2px;width:25.6px;height:8.7px;background:#e6e5eb;"></div>
<div style="left:188.6px;top:335.2px;width:50.4px;height:8.7px;background:#fefec7;"></div>
<div style="left:163px;top:343.9px;width:177.2px;height:0.94px;background:#fbfbfd;"></div>
<div style="left:290.7px;top:336.05px;width:49.5px;height:7.2px;background:#a951c2;"></div>
<div style="left:163px;top:344.84px;width:25.6px;height:8.7px;background:#e6e5eb;"></div>
<div style="left:188.6px;top:344.84px;width:50.4px;height:8.7px;background:#fefec7;"></div>
<div style="left:163px;top:353.54px;width:177.2px;height:0.94px;background:#fbfbfd;"></div>
<div style="left:290.7px;top:345.69px;width:49.5px;height:7.2px;background:#a1b1f1;"></div>
<div style="left:163px;top:354.48px;width:25.6px;height:8.7px;background:#e6e5eb;"></div>
<div style="left:188.6px;top:354.48px;width:50.4px;height:8.7px;background:#fefec7;"></div>
<div style="left:163px;top:363.18px;width:177.2px;height:0.94px;background:#fbfbfd;"></div>
<div style="left:290.7px;top:355.33px;width:49.5px;height:7.2px;background:#5d9172;"></div>
<div style="left:163px;top:364.12px;width:25.6px;height:8.7px;background:#e6e5eb;"></div>
<div style="left:188.6px;top:364.12px;width:50.4px;height:8.7px;background:#fefec7;"></div>
<div style="left:163px;top:372.82px;width:177.2px;height:0.94px;background:#fbfbfd;"></div>
<div style="left:290.7px;top:364.97px;width:49.5px;height:7.2px;background:#d1bac2;"></div>
<div style="left:163px;top:373.76px;width:25.6px;height:8.7px;background:#e6e5eb;"></div>
<div style="left:188.6px;top:373.76px;width:50.4px;height:8.7px;background:#fefec7;"></div>
<div style="left:163px;top:382.46px;width:177.2px;height:0.94px;background:#fbfbfd;"></div>
<div style="left:290.7px;top:374.61px;width:49.5px;height:7.2px;background:#f18a7a;"></div>
<div style="left:163px;top:383.4px;width:25.6px;height:8.7px;background:#e6e5eb;"></div>
<div style="left:188.6px;top:383.4px;width:50.4px;height:8.7px;background:#fefec7;"></div>
<div style="left:163px;top:392.1px;width:177.2px;height:0.94px;background:#fbfbfd;"></div>
<div style="left:290.7px;top:384.25px;width:49.5px;height:7.2px;background:#d96ae2;"></div>
<div style="left:163px;top:393.04px;width:25.6px;height:8.7px;background:#e6e5eb;"></div>
<div style="left:188.6px;top:393.04px;width:50.4px;height:8.7px;background:#fefec7;"></div>
<div style="left:163px;top:401.74px;width:177.2px;height:0.94px;background:#fbfbfd;"></div>
<div style="left:290.7px;top:393.89px;width:49.5px;height:7.2px;background:#906242;"></div>
<div style="left:163px;top:393.04px;width:177.2px;height:9.64px;overflow:hidden;background:transparent;"><span class="x t" style="left:27.4px;top:1.96px;letter-spacing:-0.28px;">Confections</span><span class="x t" style="left:77.6px;top:1.96px;letter-spacing:-0.17px;">Et quad fecit, no...</span></div>
<svg style="left:0;top:0;clip-path:inset(0 0 3px 0)" width="640" height="400" viewBox="0 0 640 400"><g transform="translate(180.4 287.65)"><path d="M0.5 2.6 v3.6 a2.4 0.9 0 0 0 4.8 0 v-3.6z" fill="#3f78d8" stroke="#2a55ad" stroke-width="0.4"/><ellipse cx="2.9" cy="2.6" rx="2.4" ry="0.9" fill="#8fb4f0"/><path d="M1.3 3.4 v2.6" stroke="#a9c8f6" stroke-width="0.7"/><path d="M3 2.2 l1.7 -2 l1.7 2 h-1 v1.6 h-1.4 v-1.6z" fill="#3eb43a" stroke="#2a8a28" stroke-width="0.3"/></g><g transform="translate(180.4 297.29)"><path d="M0.5 2.6 v3.6 a2.4 0.9 0 0 0 4.8 0 v-3.6z" fill="#3f78d8" stroke="#2a55ad" stroke-width="0.4"/><ellipse cx="2.9" cy="2.6" rx="2.4" ry="0.9" fill="#8fb4f0"/><path d="M1.3 3.4 v2.6" stroke="#a9c8f6" stroke-width="0.7"/><path d="M3 2.2 l1.7 -2 l1.7 2 h-1 v1.6 h-1.4 v-1.6z" fill="#3eb43a" stroke="#2a8a28" stroke-width="0.3"/></g><g transform="translate(180.4 306.93)"><path d="M0.5 2.6 v3.6 a2.4 0.9 0 0 0 4.8 0 v-3.6z" fill="#3f78d8" stroke="#2a55ad" stroke-width="0.4"/><ellipse cx="2.9" cy="2.6" rx="2.4" ry="0.9" fill="#8fb4f0"/><path d="M1.3 3.4 v2.6" stroke="#a9c8f6" stroke-width="0.7"/><path d="M3 2.2 l1.7 -2 l1.7 2 h-1 v1.6 h-1.4 v-1.6z" fill="#3eb43a" stroke="#2a8a28" stroke-width="0.3"/></g><g transform="translate(180.4 316.57)"><path d="M0.5 2.6 v3.6 a2.4 0.9 0 0 0 4.8 0 v-3.6z" fill="#3f78d8" stroke="#2a55ad" stroke-width="0.4"/><ellipse cx="2.9" cy="2.6" rx="2.4" ry="0.9" fill="#8fb4f0"/><path d="M1.3 3.4 v2.6" stroke="#a9c8f6" stroke-width="0.7"/><path d="M3 2.2 l1.7 -2 l1.7 2 h-1 v1.6 h-1.4 v-1.6z" fill="#3eb43a" stroke="#2a8a28" stroke-width="0.3"/></g><g transform="translate(180.4 326.21)"><path d="M0.5 2.6 v3.6 a2.4 0.9 0 0 0 4.8 0 v-3.6z" fill="#3f78d8" stroke="#2a55ad" stroke-width="0.4"/><ellipse cx="2.9" cy="2.6" rx="2.4" ry="0.9" fill="#8fb4f0"/><path d="M1.3 3.4 v2.6" stroke="#a9c8f6" stroke-width="0.7"/><path d="M3 2.2 l1.7 -2 l1.7 2 h-1 v1.6 h-1.4 v-1.6z" fill="#3eb43a" stroke="#2a8a28" stroke-width="0.3"/></g><g transform="translate(180.4 335.85)"><path d="M0.5 2.6 v3.6 a2.4 0.9 0 0 0 4.8 0 v-3.6z" fill="#3f78d8" stroke="#2a55ad" stroke-width="0.4"/><ellipse cx="2.9" cy="2.6" rx="2.4" ry="0.9" fill="#8fb4f0"/><path d="M1.3 3.4 v2.6" stroke="#a9c8f6" stroke-width="0.7"/><path d="M3 2.2 l1.7 -2 l1.7 2 h-1 v1.6 h-1.4 v-1.6z" fill="#3eb43a" stroke="#2a8a28" stroke-width="0.3"/></g><g transform="translate(180.4 345.49)"><path d="M0.5 2.6 v3.6 a2.4 0.9 0 0 0 4.8 0 v-3.6z" fill="#3f78d8" stroke="#2a55ad" stroke-width="0.4"/><ellipse cx="2.9" cy="2.6" rx="2.4" ry="0.9" fill="#8fb4f0"/><path d="M1.3 3.4 v2.6" stroke="#a9c8f6" stroke-width="0.7"/><path d="M3 2.2 l1.7 -2 l1.7 2 h-1 v1.6 h-1.4 v-1.6z" fill="#3eb43a" stroke="#2a8a28" stroke-width="0.3"/></g><g transform="translate(180.4 355.13)"><path d="M0.5 2.6 v3.6 a2.4 0.9 0 0 0 4.8 0 v-3.6z" fill="#3f78d8" stroke="#2a55ad" stroke-width="0.4"/><ellipse cx="2.9" cy="2.6" rx="2.4" ry="0.9" fill="#8fb4f0"/><path d="M1.3 3.4 v2.6" stroke="#a9c8f6" stroke-width="0.7"/><path d="M3 2.2 l1.7 -2 l1.7 2 h-1 v1.6 h-1.4 v-1.6z" fill="#3eb43a" stroke="#2a8a28" stroke-width="0.3"/></g><g transform="translate(180.4 364.77)"><path d="M0.5 2.6 v3.6 a2.4 0.9 0 0 0 4.8 0 v-3.6z" fill="#3f78d8" stroke="#2a55ad" stroke-width="0.4"/><ellipse cx="2.9" cy="2.6" rx="2.4" ry="0.9" fill="#8fb4f0"/><path d="M1.3 3.4 v2.6" stroke="#a9c8f6" stroke-width="0.7"/><path d="M3 2.2 l1.7 -2 l1.7 2 h-1 v1.6 h-1.4 v-1.6z" fill="#3eb43a" stroke="#2a8a28" stroke-width="0.3"/></g><g transform="translate(180.4 374.41)"><path d="M0.5 2.6 v3.6 a2.4 0.9 0 0 0 4.8 0 v-3.6z" fill="#3f78d8" stroke="#2a55ad" stroke-width="0.4"/><ellipse cx="2.9" cy="2.6" rx="2.4" ry="0.9" fill="#8fb4f0"/><path d="M1.3 3.4 v2.6" stroke="#a9c8f6" stroke-width="0.7"/><path d="M3 2.2 l1.7 -2 l1.7 2 h-1 v1.6 h-1.4 v-1.6z" fill="#3eb43a" stroke="#2a8a28" stroke-width="0.3"/></g><g transform="translate(180.4 384.05)"><path d="M0.5 2.6 v3.6 a2.4 0.9 0 0 0 4.8 0 v-3.6z" fill="#3f78d8" stroke="#2a55ad" stroke-width="0.4"/><ellipse cx="2.9" cy="2.6" rx="2.4" ry="0.9" fill="#8fb4f0"/><path d="M1.3 3.4 v2.6" stroke="#a9c8f6" stroke-width="0.7"/><path d="M3 2.2 l1.7 -2 l1.7 2 h-1 v1.6 h-1.4 v-1.6z" fill="#3eb43a" stroke="#2a8a28" stroke-width="0.3"/></g><g transform="translate(180.4 393.69)"><path d="M0.5 2.6 v3.6 a2.4 0.9 0 0 0 4.8 0 v-3.6z" fill="#3f78d8" stroke="#2a55ad" stroke-width="0.4"/><ellipse cx="2.9" cy="2.6" rx="2.4" ry="0.9" fill="#8fb4f0"/><path d="M1.3 3.4 v2.6" stroke="#a9c8f6" stroke-width="0.7"/><path d="M3 2.2 l1.7 -2 l1.7 2 h-1 v1.6 h-1.4 v-1.6z" fill="#3eb43a" stroke="#2a8a28" stroke-width="0.3"/></g></svg>
<div style="left:628.6px;top:266.6px;width:8.6px;height:130px;background:linear-gradient(90deg,#f1f1f8,#ffffff 45%,#ebebf4);"></div>
<div style="left:628.8px;top:266.8px;width:8.2px;height:8.4px;background:linear-gradient(135deg,#ffffff,#dcdce9);border:0.5px solid #d2d2e0;border-radius:1px;"></div>
<div style="left:628.8px;top:388px;width:8.2px;height:8.4px;background:linear-gradient(135deg,#ffffff,#dcdce9);border:0.5px solid #d2d2e0;border-radius:1px;"></div>
<div style="left:628.8px;top:275.4px;width:8.2px;height:11.4px;background:linear-gradient(90deg,#fbfbfe,#ffffff 40%,#d7d7e6);border:0.5px solid #c4c4d8;border-radius:1px;"></div>
<svg style="left:628.8px;top:266.6px" width="8.2" height="131" viewBox="0 0 8.2 131"><path d="M2.3 5.4 l1.8 -2 l1.8 2" fill="none" stroke="#303044" stroke-width="0.95"/><path d="M2.3 124.6 l1.8 2 l1.8 -2" fill="none" stroke="#303044" stroke-width="0.95"/><path d="M2.8 13.4h2.6M2.8 14.8h2.6M2.8 16.2h2.6" stroke="#aeb0c8" stroke-width="0.5"/></svg>
<div style="left:161.9px;top:396.9px;width:476.2px;height:0.9px;background:#2e3a48;"></div>
<div style="left:637.2px;top:43.4px;width:0.9px;height:354.4px;background:#3a4452;"></div>
<div style="left:2.2px;top:396.9px;width:157.6px;height:0.9px;background:#3a4048;"></div>
<div style="left:0px;top:397.8px;width:640px;height:2.2px;background:#a5a4bc;"></div>
<span class="x ttl" style="left:13px;top:5px;letter-spacing:-0.33px;white-space:pre;">SQL Data Generator  - New Project *</span>
<span class="x t" style="left:5.5px;top:18px;letter-spacing:-0.54px;"><u>F</u>ile</span>
<span class="x t" style="left:22px;top:18px;letter-spacing:-0.45px;"><u>A</u>ctions</span>
<span class="x t" style="left:47.5px;top:18px;letter-spacing:-0.44px;"><u>T</u>ools</span>
<span class="x t" style="left:68px;top:18px;letter-spacing:-0.6px;"><u>H</u>elp</span>
<span class="x t" style="left:19px;top:32px;letter-spacing:-0.3px;">New Project...</span>
<span class="x t" style="left:72.5px;top:32px;letter-spacing:-0.27px;">Open Project...</span>
<span class="x t" style="left:129.2px;top:32px;letter-spacing:-0.27px;">Edit Project...</span>
<span class="x t" style="left:181.5px;top:32px;letter-spacing:-0.38px;">Save Project</span>
<span class="x t" style="left:235px;top:32px;letter-spacing:-0.51px;">Refresh Schema</span>
<span class="x t" style="left:298px;top:32px;letter-spacing:-0.29px;">Generate Data...</span>
<span class="x h1" style="left:17.5px;top:49px;letter-spacing:0.08px;">(local)</span>
<span class="x h1" style="left:86px;top:49px;letter-spacing:-0.23px;">Northwind</span>
<span class="x t w" style="left:60.6px;top:65px;letter-spacing:-0.4px;color:#e2e2e6;">Find:</span>
<span class="x tb" style="left:5.5px;top:77px;letter-spacing:-0.28px;">Popul...</span>
<span class="x tb" style="left:31px;top:77px;letter-spacing:-0.14px;">Name</span>
<span class="x tb" style="left:116px;top:77px;letter-spacing:-0.18px;">Error</span>
<span class="x tb" style="left:38px;top:86px;letter-spacing:-0.32px;">[dbo].[Categories]</span>
<span class="x t col" style="left:38px;top:95px;letter-spacing:-0.19px;">CategoryID</span>
<span class="x t col" style="left:38px;top:105px;letter-spacing:-0.3px;">CategoryName</span>
<span class="x t col" style="left:38px;top:114px;letter-spacing:-0.18px;">Description</span>
<span class="x t col" style="left:38px;top:123px;letter-spacing:-0.37px;">Picture</span>
<span class="x tb" style="left:38px;top:132px;letter-spacing:-0.07px;">[dbo].[CustomerCusto...</span>
<span class="x tb" style="left:38px;top:141px;letter-spacing:-0.07px;">[dbo].[CustomerDemog...</span>
<span class="x tb" style="left:38px;top:150px;letter-spacing:-0.09px;">[dbo].[Customers]</span>
<span class="x tb" style="left:38px;top:160px;letter-spacing:-0.11px;">[dbo].[Employees]</span>
<span class="x t col" style="left:38px;top:169px;letter-spacing:-0.33px;">EmployeeID</span>
<span class="x t col" style="left:38px;top:178px;letter-spacing:-0.34px;">LastName</span>
<span class="x t col" style="left:38px;top:187px;letter-spacing:-0.28px;">FirstName</span>
<span class="x t col" style="left:38px;top:196px;letter-spacing:-0.13px;">Title</span>
<span class="x t col" style="left:38px;top:205px;letter-spacing:-0.23px;">TitleOfCourtesy</span>
<span class="x t col" style="left:38px;top:214px;letter-spacing:-0.19px;">BirthDate</span>
<span class="x t col" style="left:38px;top:224px;letter-spacing:-0.23px;">HireDate</span>
<span class="x t col" style="left:38px;top:233px;letter-spacing:-0.3px;">Address</span>
<span class="x t col" style="left:38px;top:242px;letter-spacing:-0.34px;">City</span>
<span class="x t col" style="left:38px;top:251px;letter-spacing:-0.33px;">Region</span>
<span class="x t col" style="left:38px;top:260px;letter-spacing:-0.36px;">PostalCode</span>
<span class="x t col" style="left:38px;top:269px;letter-spacing:-0.29px;">Country</span>
<span class="x t col" style="left:38px;top:279px;letter-spacing:-0.45px;">HomePhone</span>
<span class="x t col" style="left:38px;top:288px;letter-spacing:-0.35px;">Extension</span>
<span class="x t col" style="left:38px;top:297px;letter-spacing:-0.29px;">Photo</span>
<span class="x t col" style="left:38px;top:306px;letter-spacing:-0.19px;">Notes</span>
<span class="x t col" style="left:38px;top:315px;letter-spacing:-0.19px;">ReportsTo</span>
<span class="x t col" style="left:38px;top:324px;letter-spacing:-0.32px;">PhotoPath</span>
<span class="x tb" style="left:38px;top:334px;letter-spacing:-0.02px;">[dbo].[EmployeeTerrito...</span>
<span class="x tb" style="left:38px;top:343px;letter-spacing:-0.03px;">[dbo].[Order Details]</span>
<span class="x tb" style="left:38px;top:352px;letter-spacing:-0.02px;">[dbo].[Orders]</span>
<span class="x tb" style="left:38px;top:361px;letter-spacing:-0.06px;">[dbo].[Products]</span>
<span class="x t" style="left:10.9px;top:387px;letter-spacing:-0.42px;">Select All</span>
<span class="x t" style="left:47.2px;top:387px;letter-spacing:-0.38px;">Deselect All</span>
<span class="x t" style="left:86.8px;top:387px;letter-spacing:-0.28px;">Invert Selection</span>
<span class="x h1" style="left:167.8px;top:49px;letter-spacing:-0.22px;">Column generation settings</span>
<span class="x h2" style="left:179px;top:63px;letter-spacing:-0.31px;">[dbo].[Categories].[CategoryName]</span>
<span class="x t" style="left:167.2px;top:79px;letter-spacing:-0.29px;">Generator:</span>
<span class="x t" style="left:208.4px;top:79px;letter-spacing:-0.33px;">Categories</span>
<span class="x t gi" style="left:238.4px;top:79px;letter-spacing:-0.28px;">- Cereals, Grain, Confections, Produce...</span>
<span class="x t g2" style="left:167.2px;top:92px;letter-spacing:-0.35px;">Generator settings</span>
<span class="x t" style="left:180.5px;top:105px;letter-spacing:-0.53px;">Seed:</span>
<span class="x t" style="left:221.8px;top:105px;">1</span>
<span class="x t" style="left:258.8px;top:104px;letter-spacing:-0.45px;">Regular <u>E</u>xpression:</span>
<span class="x t" style="left:190.2px;top:120px;letter-spacing:-0.43px;">Set unique</span>
<span class="x t g" style="left:190.2px;top:135px;letter-spacing:-0.39px;">Allow null values</span>
<span class="x t g" style="left:187.2px;top:148px;letter-spacing:-0.36px;">% null:</span>
<span class="x t g" style="left:221.8px;top:148px;">1</span>
<span class="x t" style="left:262px;top:115px;letter-spacing:-0.35px;">(Dairy|Beverages|Confections|Seafood|Meat|Poltry|Grain|Cereals|Produce|Shell fish|Snails)</span>
<span class="x t" style="left:422.4px;top:227px;letter-spacing:-0.26px;">Add <u>S</u>nippet...</span>
<span class="x t" style="left:477.6px;top:227px;letter-spacing:-0.21px;">Insert File <u>L</u>ist...</span>
<span class="x t" style="left:538.2px;top:227px;letter-spacing:-0.32px;">Insert Table <u>C</u>olumn...</span>
<span class="x h1" style="left:179.8px;top:256px;letter-spacing:-0.03px;">Preview of data to be generated (first 100 lines)</span>
<span class="x t w" style="left:453.2px;top:258px;letter-spacing:-0.31px;">Total rows to be generated: 1000 (Delete existing data before generation)</span>
<span class="x t" style="left:190.6px;top:270px;letter-spacing:-0.45px;">CategoryName</span>
<span class="x t gi" style="left:190.6px;top:277px;letter-spacing:-0.37px;color:#8f8e99;">Categories</span>
<span class="x t" style="left:241.4px;top:270px;letter-spacing:-0.35px;">Description</span>
<span class="x t gi" style="left:241.4px;top:277px;letter-spacing:-0.35px;color:#8f8e99;">Description</span>
<span class="x t" style="left:292px;top:270px;letter-spacing:-0.43px;">Picture</span>
<span class="x t gi" style="left:292px;top:277px;letter-spacing:-0.42px;color:#8f8e99;">Image</span>
<span class="x t" style="top:289px;left:auto;right:463.6px;">1</span>
<span class="x t" style="left:190.4px;top:289px;letter-spacing:-0.24px;">Confections</span>
<span class="x t" style="left:240.6px;top:289px;letter-spacing:-0.13px;">Longam, e fune...</span>
<span class="x mono" style="left:292.6px;top:290px;letter-spacing:-0.12px;">Image</span>
<span class="x mono2" style="left:309.6px;top:291px;letter-spacing:0.28px;">0x03013213</span>
<span class="x t" style="top:298px;left:auto;right:463.6px;">2</span>
<span class="x t" style="left:190.4px;top:298px;letter-spacing:-0.32px;">Beverages</span>
<span class="x t" style="left:240.6px;top:298px;letter-spacing:-0.08px;">Multum gravum...</span>
<span class="x mono" style="left:292.6px;top:300px;letter-spacing:-0.12px;">Image</span>
<span class="x mono2" style="left:309.6px;top:301px;letter-spacing:0.28px;">0x07E01213</span>
<span class="x t" style="top:308px;left:auto;right:463.6px;">3</span>
<span class="x t" style="left:190.4px;top:308px;letter-spacing:-0.25px;">Poltry</span>
<span class="x t" style="left:240.6px;top:308px;letter-spacing:-0.17px;">Et quad fecit, no...</span>
<span class="x mono" style="left:292.6px;top:309px;letter-spacing:-0.12px;">Image</span>
<span class="x mono2" style="left:309.6px;top:310px;letter-spacing:0.28px;">0x04E06003</span>
<span class="x t" style="top:318px;left:auto;right:463.6px;">4</span>
<span class="x t" style="left:190.4px;top:318px;letter-spacing:-0.41px;">Produce</span>
<span class="x t" style="left:240.6px;top:318px;letter-spacing:-0.25px;">Versus esset in v...</span>
<span class="x mono" style="left:292.6px;top:319px;letter-spacing:-0.12px;">Image</span>
<span class="x mono2" style="left:309.6px;top:320px;letter-spacing:0.28px;">0x10640003</span>
<span class="x t" style="top:327px;left:auto;right:463.6px;">5</span>
<span class="x t" style="left:190.4px;top:327px;letter-spacing:-0.36px;">Cereals</span>
<span class="x t" style="left:240.6px;top:327px;letter-spacing:-0.08px;">Multum gravum...</span>
<span class="x mono" style="left:292.6px;top:329px;letter-spacing:-0.12px;">Image</span>
<span class="x mono2" style="left:309.6px;top:330px;letter-spacing:0.28px;">0x0E0A0373</span>
<span class="x t" style="top:337px;left:auto;right:463.6px;">6</span>
<span class="x t" style="left:190.4px;top:337px;letter-spacing:-0.45px;">Meat</span>
<span class="x t" style="left:240.6px;top:337px;letter-spacing:-0.25px;">Versus esset in v...</span>
<span class="x mono" style="left:292.6px;top:338px;letter-spacing:-0.12px;">Image</span>
<span class="x mono2" style="left:309.6px;top:339px;letter-spacing:0.06px;">0x10E07E214</span>
<span class="x t" style="top:347px;left:auto;right:463.6px;">7</span>
<span class="x t" style="left:190.4px;top:347px;letter-spacing:-0.27px;">Seafood</span>
<span class="x t" style="left:240.6px;top:347px;letter-spacing:-0.27px;">Pro linguens non...</span>
<span class="x mono" style="left:292.6px;top:348px;letter-spacing:-0.12px;">Image</span>
<span class="x mono2" style="left:309.6px;top:349px;letter-spacing:0.06px;">0x0E0137150</span>
<span class="x t" style="top:356px;left:auto;right:463.6px;">8</span>
<span class="x t" style="left:190.4px;top:356px;letter-spacing:-0.49px;">Snails</span>
<span class="x t" style="left:240.6px;top:356px;letter-spacing:-0.22px;">Longam, e gravi...</span>
<span class="x mono" style="left:292.6px;top:358px;letter-spacing:-0.12px;">Image</span>
<span class="x mono2" style="left:309.6px;top:358px;letter-spacing:0.06px;">0x0A7131081</span>
<span class="x t" style="top:366px;left:auto;right:463.6px;">9</span>
<span class="x t" style="left:190.4px;top:366px;letter-spacing:-0.32px;">Beverages</span>
<span class="x t" style="left:240.6px;top:366px;letter-spacing:-0.08px;">Multum gravum...</span>
<span class="x mono" style="left:292.6px;top:367px;letter-spacing:-0.12px;">Image</span>
<span class="x mono2" style="left:309.6px;top:368px;letter-spacing:0.06px;">0x0E0A00054</span>
<span class="x t" style="top:376px;left:auto;right:463.6px;">10</span>
<span class="x t" style="left:190.4px;top:375px;letter-spacing:-0.36px;">Cereals</span>
<span class="x t" style="left:240.6px;top:375px;letter-spacing:-0.25px;">Et quad estis vo...</span>
<span class="x mono" style="left:292.6px;top:377px;letter-spacing:-0.12px;">Image</span>
<span class="x mono2" style="left:309.6px;top:378px;letter-spacing:0.06px;">0x07E007703</span>
<span class="x t" style="top:385px;left:auto;right:463.6px;">11</span>
<span class="x t" style="left:190.4px;top:385px;letter-spacing:-0.3px;">Dairy</span>
<span class="x t" style="left:240.6px;top:385px;letter-spacing:-0.16px;">Tam quo, et pla...</span>
<span class="x mono" style="left:292.6px;top:386px;letter-spacing:-0.12px;">Image</span>
<span class="x mono2" style="left:309.6px;top:387px;letter-spacing:0.06px;">0x032037008</span>
</div>
</body>
</html>
